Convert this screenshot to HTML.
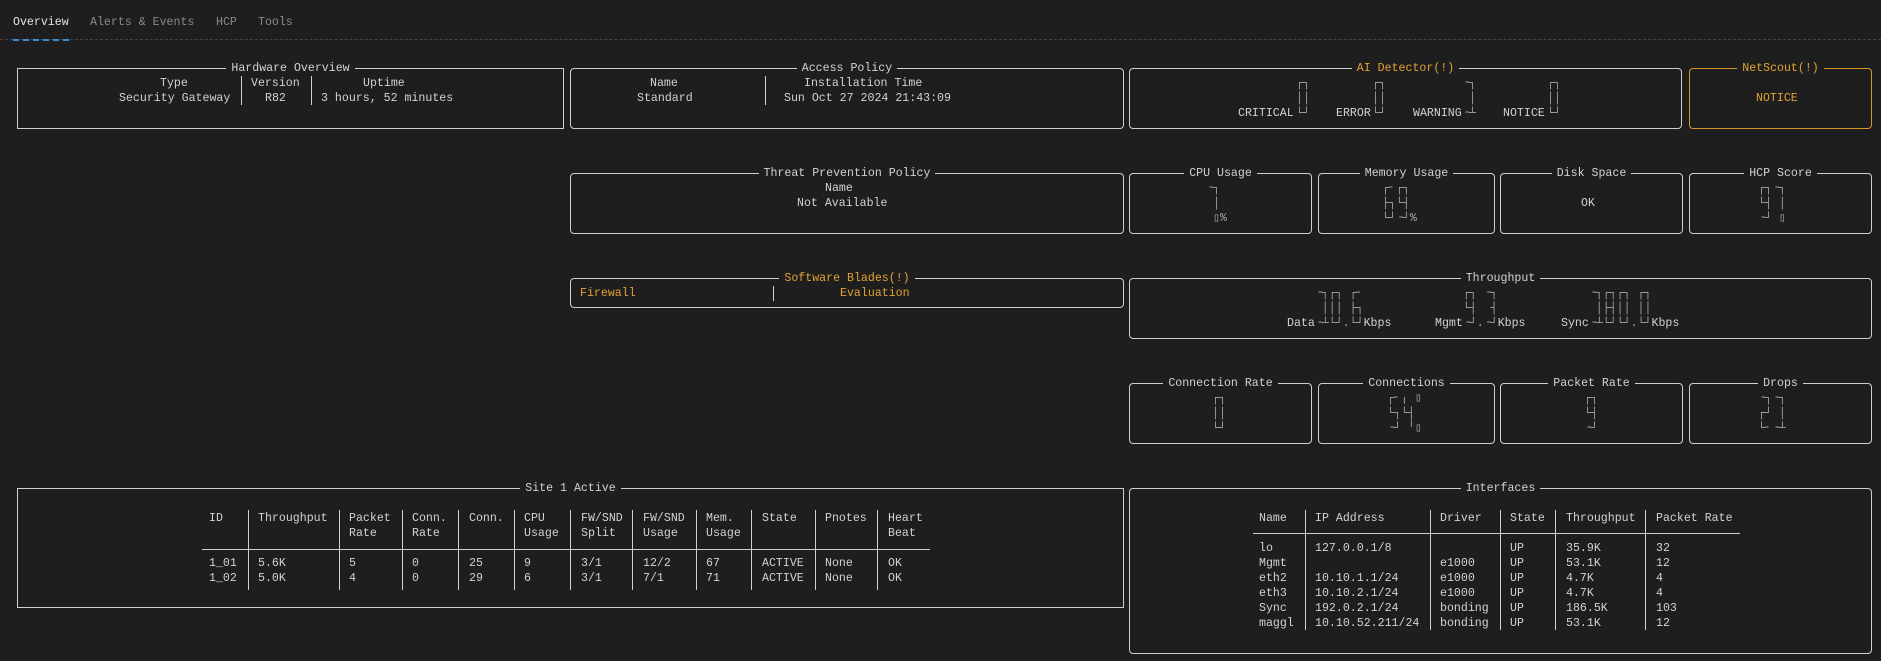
<!DOCTYPE html>
<html><head><meta charset="utf-8"><style>
html,body{margin:0;padding:0;background:#1e1e1e;}
body{width:1881px;height:661px;position:relative;overflow:hidden;font-family:"Liberation Mono",monospace;font-size:11.6px;color:#d2d2d2;}
.t{position:absolute;white-space:pre;line-height:15px;height:15px;}
.b{position:absolute;border:1px solid #cfcfcf;border-radius:4px;box-sizing:border-box;}
.sq{border-radius:0;}
.ti{position:absolute;top:-8px;left:0;right:0;text-align:center;line-height:15px;}
.ti span{background:#1e1e1e;padding:0 5px;}
.o{color:#e3a234;}
.v{position:absolute;width:1px;background:#cfcfcf;}
.h{position:absolute;height:1px;background:#cfcfcf;}
.d{position:absolute;white-space:pre;line-height:15px;color:#a8a8a8;}
.g{color:#8a8a8a;}
</style></head><body>
<!-- tabs -->
<div class="t" style="left:13px;top:15px;color:#e6e6e6">Overview</div>
<div class="t g" style="left:90px;top:15px">Alerts &amp; Events</div>
<div class="t g" style="left:216px;top:15px">HCP</div>
<div class="t g" style="left:258px;top:15px">Tools</div>
<div style="position:absolute;left:0;top:39px;width:1881px;border-top:1px dashed #444"></div>
<div style="position:absolute;left:13px;top:39px;width:56px;border-top:2px dashed #3a8ed8"></div>

<!-- Hardware Overview -->
<div class="b sq" style="left:17px;top:68px;width:547px;height:61px"><div class="ti"><span>Hardware Overview</span></div></div>
<div class="t" style="left:160px;top:76px">Type</div>
<div class="t" style="left:119px;top:91px">Security Gateway</div>
<div class="v" style="left:241px;top:76px;height:29px"></div>
<div class="t" style="left:251px;top:76px">Version</div>
<div class="t" style="left:265px;top:91px">R82</div>
<div class="v" style="left:311px;top:76px;height:29px"></div>
<div class="t" style="left:363px;top:76px">Uptime</div>
<div class="t" style="left:321px;top:91px">3 hours, 52 minutes</div>

<!-- Access Policy -->
<div class="b" style="left:570px;top:68px;width:554px;height:61px"><div class="ti"><span>Access Policy</span></div></div>
<div class="t" style="left:650px;top:76px">Name</div>
<div class="t" style="left:637px;top:91px">Standard</div>
<div class="v" style="left:765px;top:76px;height:29px"></div>
<div class="t" style="left:804px;top:76px">Installation Time</div>
<div class="t" style="left:784px;top:91px">Sun Oct 27 2024 21:43:09</div>

<!-- AI Detector -->
<div class="b" style="left:1129px;top:68px;width:553px;height:61px"><div class="ti o"><span>AI Detector(!)</span></div></div>
<div class="t" style="left:1238px;top:106px">CRITICAL</div>
<div class="d" style="left:1296px;top:76px">┌┐
││
└┘</div>
<div class="t" style="left:1336px;top:106px">ERROR</div>
<div class="d" style="left:1372px;top:76px">┌┐
││
└┘</div>
<div class="t" style="left:1413px;top:106px">WARNING</div>
<div class="d" style="left:1462px;top:76px">╶┐
 │
╶┴</div>
<div class="t" style="left:1503px;top:106px">NOTICE</div>
<div class="d" style="left:1547px;top:76px">┌┐
││
└┘</div>

<!-- NetScout -->
<div class="b" style="left:1689px;top:68px;width:183px;height:61px;border-color:#d9962a"><div class="ti o"><span>NetScout(!)</span></div></div>
<div class="t o" style="left:1756px;top:91px">NOTICE</div>

<!-- Threat Prevention -->
<div class="b" style="left:570px;top:173px;width:554px;height:61px"><div class="ti"><span>Threat Prevention Policy</span></div></div>
<div class="t" style="left:825px;top:181px">Name</div>
<div class="t" style="left:797px;top:196px">Not Available</div>

<!-- CPU etc -->
<div class="b" style="left:1129px;top:173px;width:183px;height:61px"><div class="ti"><span>CPU Usage</span></div></div>
<div class="d" style="left:1206px;top:181px">╶┐
 │
 ▯%</div>
<div class="b" style="left:1318px;top:173px;width:177px;height:61px"><div class="ti"><span>Memory Usage</span></div></div>
<div class="d" style="left:1382px;top:181px">┌╴┌┐
├┐└┤
└┘╶┘%</div>
<div class="b" style="left:1500px;top:173px;width:183px;height:61px"><div class="ti"><span>Disk Space</span></div></div>
<div class="t" style="left:1581px;top:196px">OK</div>
<div class="b" style="left:1689px;top:173px;width:183px;height:61px"><div class="ti"><span>HCP Score</span></div></div>
<div class="d" style="left:1758px;top:181px">┌┐╶┐
└┤ │
╶┘ ▯</div>

<!-- Software Blades -->
<div class="b" style="left:570px;top:278px;width:554px;height:30px"><div class="ti o"><span>Software Blades(!)</span></div></div>
<div class="t o" style="left:580px;top:286px">Firewall</div>
<div class="v" style="left:773px;top:286px;height:15px"></div>
<div class="t o" style="left:840px;top:286px">Evaluation</div>

<!-- Throughput -->
<div class="b" style="left:1129px;top:278px;width:743px;height:61px"><div class="ti"><span>Throughput</span></div></div>
<div class="d" style="left:1287px;top:286px"><span>    ╶┐┌┐ ┌╴</span>
<span>     │││ ├┐</span>
<span style="color:#d2d2d2">Data</span>╶┴└┘.└┘<span style="color:#d2d2d2">Kbps</span></div>
<div class="d" style="left:1435px;top:286px">    ┌┐ ╶┐
    └┤  ┤
<span style="color:#d2d2d2">Mgmt</span>╶┘.╶┘<span style="color:#d2d2d2">Kbps</span></div>
<div class="d" style="left:1561px;top:286px">    ╶┐┌┐┌┐ ┌┐
     │├┤││ ││
<span style="color:#d2d2d2">Sync</span>╶┴└┘└┘.└┘<span style="color:#d2d2d2">Kbps</span></div>

<!-- Row 4 -->
<div class="b" style="left:1129px;top:383px;width:183px;height:61px"><div class="ti"><span>Connection Rate</span></div></div>
<div class="d" style="left:1212px;top:391px">┌┐
││
└┘</div>
<div class="b" style="left:1318px;top:383px;width:177px;height:61px"><div class="ti"><span>Connections</span></div></div>
<div class="d" style="left:1387px;top:391px">┌╴╷ ▯
└┐└┤
╶┘ ╵▯</div>
<div class="b" style="left:1500px;top:383px;width:183px;height:61px"><div class="ti"><span>Packet Rate</span></div></div>
<div class="d" style="left:1584px;top:391px">┌┐
└┤
╶┘</div>
<div class="b" style="left:1689px;top:383px;width:183px;height:61px"><div class="ti"><span>Drops</span></div></div>
<div class="d" style="left:1758px;top:391px">╶┐╶┐
┌┘ │
└╴╶┴</div>

<!-- Site 1 Active -->
<div class="b sq" style="left:17px;top:488px;width:1107px;height:120px"><div class="ti"><span>Site 1 Active</span></div></div>
<div class="h" style="left:202px;top:549px;width:728px"></div>
<div class="t" style="left:209px;top:511px">ID</div>
<div class="t" style="left:258px;top:511px">Throughput</div>
<div class="t" style="left:349px;top:511px">Packet
Rate</div>
<div class="t" style="left:412px;top:511px">Conn.
Rate</div>
<div class="t" style="left:469px;top:511px">Conn.</div>
<div class="t" style="left:524px;top:511px">CPU
Usage</div>
<div class="t" style="left:581px;top:511px">FW/SND
Split</div>
<div class="t" style="left:643px;top:511px">FW/SND
Usage</div>
<div class="t" style="left:706px;top:511px">Mem.
Usage</div>
<div class="t" style="left:762px;top:511px">State</div>
<div class="t" style="left:825px;top:511px">Pnotes</div>
<div class="t" style="left:888px;top:511px">Heart
Beat</div>
<div class="t" style="left:209px;top:556px">1_01
1_02</div>
<div class="t" style="left:258px;top:556px">5.6K
5.0K</div>
<div class="t" style="left:349px;top:556px">5
4</div>
<div class="t" style="left:412px;top:556px">0
0</div>
<div class="t" style="left:469px;top:556px">25
29</div>
<div class="t" style="left:524px;top:556px">9
6</div>
<div class="t" style="left:581px;top:556px">3/1
3/1</div>
<div class="t" style="left:643px;top:556px">12/2
7/1</div>
<div class="t" style="left:706px;top:556px">67
71</div>
<div class="t" style="left:762px;top:556px">ACTIVE
ACTIVE</div>
<div class="t" style="left:825px;top:556px">None
None</div>
<div class="t" style="left:888px;top:556px">OK
OK</div>
<div class="v" style="left:248px;top:510px;height:80px"></div>
<div class="v" style="left:339px;top:510px;height:80px"></div>
<div class="v" style="left:402px;top:510px;height:80px"></div>
<div class="v" style="left:458px;top:510px;height:80px"></div>
<div class="v" style="left:514px;top:510px;height:80px"></div>
<div class="v" style="left:570px;top:510px;height:80px"></div>
<div class="v" style="left:632px;top:510px;height:80px"></div>
<div class="v" style="left:696px;top:510px;height:80px"></div>
<div class="v" style="left:751px;top:510px;height:80px"></div>
<div class="v" style="left:815px;top:510px;height:80px"></div>
<div class="v" style="left:877px;top:510px;height:80px"></div>

<!-- Interfaces -->
<div class="b" style="left:1129px;top:488px;width:743px;height:166px"><div class="ti"><span>Interfaces</span></div></div>
<div class="h" style="left:1253px;top:533px;width:487px"></div>
<div class="t" style="left:1259px;top:511px">Name</div>
<div class="t" style="left:1315px;top:511px">IP Address</div>
<div class="t" style="left:1440px;top:511px">Driver</div>
<div class="t" style="left:1510px;top:511px">State</div>
<div class="t" style="left:1566px;top:511px">Throughput</div>
<div class="t" style="left:1656px;top:511px">Packet Rate</div>
<div class="t" style="left:1259px;top:541px">lo
Mgmt
eth2
eth3
Sync
maggl</div>
<div class="t" style="left:1315px;top:541px">127.0.0.1/8

10.10.1.1/24
10.10.2.1/24
192.0.2.1/24
10.10.52.211/24</div>
<div class="t" style="left:1440px;top:541px">
e1000
e1000
e1000
bonding
bonding</div>
<div class="t" style="left:1510px;top:541px">UP
UP
UP
UP
UP
UP</div>
<div class="t" style="left:1566px;top:541px">35.9K
53.1K
4.7K
4.7K
186.5K
53.1K</div>
<div class="t" style="left:1656px;top:541px">32
12
4
4
103
12</div>
<div class="v" style="left:1305px;top:510px;height:120px"></div>
<div class="v" style="left:1430px;top:510px;height:120px"></div>
<div class="v" style="left:1500px;top:510px;height:120px"></div>
<div class="v" style="left:1555px;top:510px;height:120px"></div>
<div class="v" style="left:1645px;top:510px;height:120px"></div>
</body></html>
